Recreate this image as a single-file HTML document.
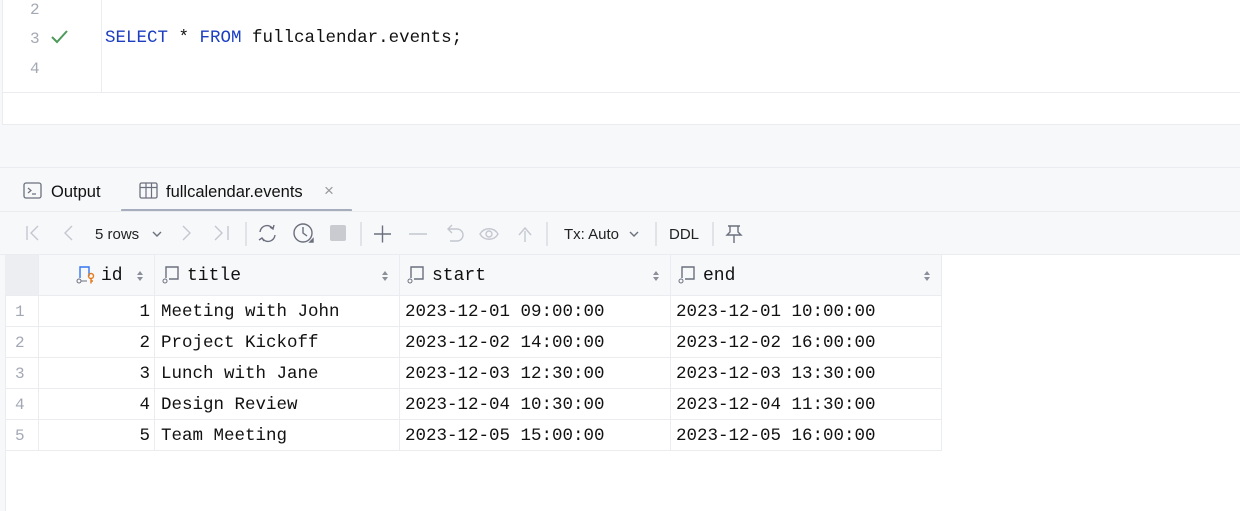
<!DOCTYPE html>
<html><head><meta charset="utf-8"><style>
*{margin:0;padding:0;box-sizing:border-box}
body{width:1240px;height:511px;overflow:hidden;background:#f7f8fa;font-family:"Liberation Sans",sans-serif;position:relative}
.abs{position:absolute}
.mono{font-family:"Liberation Mono",monospace;font-size:17.5px}
.ln{position:absolute;left:30px;width:12px;color:#a3a8b5;font-size:16px;font-family:"Liberation Mono",monospace}
.cell{position:absolute;height:31px;line-height:33px;border-right:1px solid #ebecf0;border-bottom:1px solid #ebecf0;font-family:"Liberation Mono",monospace;font-size:17.5px;color:#111;white-space:nowrap}
.hd{position:absolute;top:255px;height:41px;line-height:43px;border-right:1px solid #ebecf0;border-bottom:1px solid #ebecf0;background:#f7f8fa;font-family:"Liberation Mono",monospace;font-size:18px;color:#111}
.ic{display:inline-block;vertical-align:middle;margin-right:6px;margin-top:-3px}
.srt{position:absolute;right:10px;top:15px}
</style></head><body>
<div class="abs" style="left:2px;top:0;width:1238px;height:125px;background:#fff;border-left:1px solid #ebecf0;border-bottom:1px solid #ebecf0"></div>
<div class="abs" style="left:2px;top:92px;width:1238px;height:1px;background:#ebecf0"></div>
<div class="abs" style="left:101px;top:0;width:1px;height:92px;background:#ebecf0"></div>
<div class="ln" style="top:1px">2</div>
<div class="ln" style="top:30px">3</div>
<div class="ln" style="top:60px">4</div>
<svg class="abs" style="left:50px;top:29px" width="20" height="16"><path d="M2 8 L7 13 L17 2" stroke="#4d9a5a" stroke-width="2" fill="none"/></svg>
<div class="abs mono" style="left:105px;top:26px;line-height:24px;color:#111"><span style="color:#1c3fc2">SELECT</span> * <span style="color:#1c3fc2">FROM</span> fullcalendar.events;</div>
<div class="abs" style="left:0;top:167px;width:1240px;height:1px;background:#ebecf0"></div>
<svg class="abs" style="left:23px;top:182px" width="19" height="17"><rect x="1" y="1" width="17" height="15" rx="2" fill="none" stroke="#6c707e" stroke-width="1.3"/><path d="M5 6l3 2.5-3 2.5M9 12h4" stroke="#6c707e" stroke-width="1.2" fill="none"/></svg>
<div class="abs" style="left:51px;top:183px;font-size:16.5px;color:#111">Output</div>
<svg class="abs" style="left:139px;top:182px" width="19" height="17"><rect x="1" y="1" width="17" height="15" rx="1.5" fill="none" stroke="#6c707e" stroke-width="1.3"/><path d="M1 5.5h17M7 1v15M12.5 1v15" stroke="#6c707e" stroke-width="1.2"/></svg>
<div class="abs" style="left:166px;top:183px;font-size:16.5px;color:#111">fullcalendar.events</div>
<div class="abs" style="left:324px;top:181px;font-size:17px;color:#999">×</div>
<div class="abs" style="left:121px;top:209px;width:231px;height:3px;background:#a6adbd;border-radius:1px"></div>
<div class="abs" style="left:0;top:211px;width:1240px;height:1px;background:#ebecf0"></div>
<div class="abs" style="left:0;top:254px;width:1240px;height:1px;background:#ebecf0"></div>
<svg class="abs" style="left:0;top:212px" width="760" height="42" fill="none" stroke-width="1.4">
<g stroke="#c4c7cf"><path d="M27 14v14M38 14l-7 7 7 7"/><path d="M72 14l-7 7 7 7"/><path d="M183 14l7 7-7 7"/><path d="M215 14l7 7-7 7M228 14v14"/></g>
<path d="M153 20l4 4 4-4" stroke="#6c707e"/>
<g stroke="#d8dae0"><path d="M246 10v24M361 10v24M547 10v24M656 10v24M713 10v24"/></g>
<g stroke="#6c707e"><path d="M260 20a7 7 0 0 1 13-3M275 23a7 7 0 0 1-13 3M270 15l3 2 1-4M264 29l-2-3-3 2"/>
<circle cx="303" cy="21" r="9"/><path d="M303 15v6l4 3"/><path d="M310 30l3-3v3z" fill="#6c707e"/>
<path d="M374 22h17M382.5 13.5v17"/></g>
<rect x="330" y="13" width="16" height="16" rx="2" fill="#c9cbd1"/>
<g stroke="#c4c7cf"><path d="M409 22h18"/><path d="M448 17h9a6 6 0 0 1 0 12h-7M452 13l-4 4 4 4"/><path d="M480 22c4-7 14-7 18 0c-4 7-14 7-18 0z"/><circle cx="489" cy="22" r="3"/><path d="M525 30v-11M519 23l6-7 6 7"/></g>
<path d="M630 20l4 4 4-4" stroke="#6c707e"/>
<path d="M728 14h12M730 14v6l-3 3h14l-3-3v-6M734 23v8" stroke="#6c707e"/>
</svg>
<div class="abs" style="left:95px;top:226px;font-size:15px;color:#222">5 rows</div>
<div class="abs" style="left:564px;top:226px;font-size:15px;color:#222">Tx: Auto</div>
<div class="abs" style="left:669px;top:226px;font-size:15px;color:#222">DDL</div>
<div class="abs" style="left:5px;top:255px;width:1235px;height:256px;background:#fff;border-left:1px solid #ebecf0"></div>
<div class="hd" style="left:5px;width:34px;background:#eceef1"></div>
<div class="hd" style="left:39px;width:116px"><span style="position:absolute;left:36px"><svg class="ic" width="20" height="20"><path d="M5 14V3h9v9" stroke="#3574f0" stroke-width="1.4" fill="none"/><circle cx="4" cy="17" r="2" stroke="#6c707e" fill="none"/><path d="M6 17h6" stroke="#6c707e"/><circle cx="16" cy="12" r="2.5" stroke="#e57a1a" stroke-width="1.4" fill="none"/><path d="M16 14.5v5M16 17h2" stroke="#e57a1a" stroke-width="1.4"/></svg>id</span><svg class="srt" width="8" height="12"><path d="M1 5l3-4 3 4zM1 7l3 4 3-4z" fill="#8c8f99"/></svg></div>
<div class="hd" style="left:155px;width:245px"><span style="position:absolute;left:6px"><svg class="ic" width="20" height="20"><path d="M5 14V3h12v12H8" stroke="#6c707e" stroke-width="1.4" fill="none"/><circle cx="4" cy="17" r="2" stroke="#6c707e" fill="none"/></svg>title</span><svg class="srt" width="8" height="12"><path d="M1 5l3-4 3 4zM1 7l3 4 3-4z" fill="#8c8f99"/></svg></div>
<div class="hd" style="left:400px;width:271px"><span style="position:absolute;left:6px"><svg class="ic" width="20" height="20"><path d="M5 14V3h12v12H8" stroke="#6c707e" stroke-width="1.4" fill="none"/><circle cx="4" cy="17" r="2" stroke="#6c707e" fill="none"/></svg>start</span><svg class="srt" width="8" height="12"><path d="M1 5l3-4 3 4zM1 7l3 4 3-4z" fill="#8c8f99"/></svg></div>
<div class="hd" style="left:671px;width:271px"><span style="position:absolute;left:6px"><svg class="ic" width="20" height="20"><path d="M5 14V3h12v12H8" stroke="#6c707e" stroke-width="1.4" fill="none"/><circle cx="4" cy="17" r="2" stroke="#6c707e" fill="none"/></svg>end</span><svg class="srt" width="8" height="12"><path d="M1 5l3-4 3 4zM1 7l3 4 3-4z" fill="#8c8f99"/></svg></div>
<div id="rows"></div>
<script>
var d=[["Meeting with John","2023-12-01 09:00:00","2023-12-01 10:00:00"],["Project Kickoff","2023-12-02 14:00:00","2023-12-02 16:00:00"],["Lunch with Jane","2023-12-03 12:30:00","2023-12-03 13:30:00"],["Design Review","2023-12-04 10:30:00","2023-12-04 11:30:00"],["Team Meeting","2023-12-05 15:00:00","2023-12-05 16:00:00"]];
var h="";d.forEach(function(r,i){var t=296+i*31.1;
h+='<div class="cell" style="top:'+t+'px;left:5px;width:34px;color:#a3a8b5;font-size:16px;padding-left:10px">'+(i+1)+'</div>';
h+='<div class="cell" style="top:'+t+'px;left:39px;width:116px;text-align:right;padding-right:4px">'+(i+1)+'</div>';
h+='<div class="cell" style="top:'+t+'px;left:155px;width:245px;padding-left:6px">'+r[0]+'</div>';
h+='<div class="cell" style="top:'+t+'px;left:400px;width:271px;padding-left:5px">'+r[1]+'</div>';
h+='<div class="cell" style="top:'+t+'px;left:671px;width:271px;padding-left:5px">'+r[2]+'</div>';});
document.getElementById("rows").innerHTML=h;
</script>
</body></html>
